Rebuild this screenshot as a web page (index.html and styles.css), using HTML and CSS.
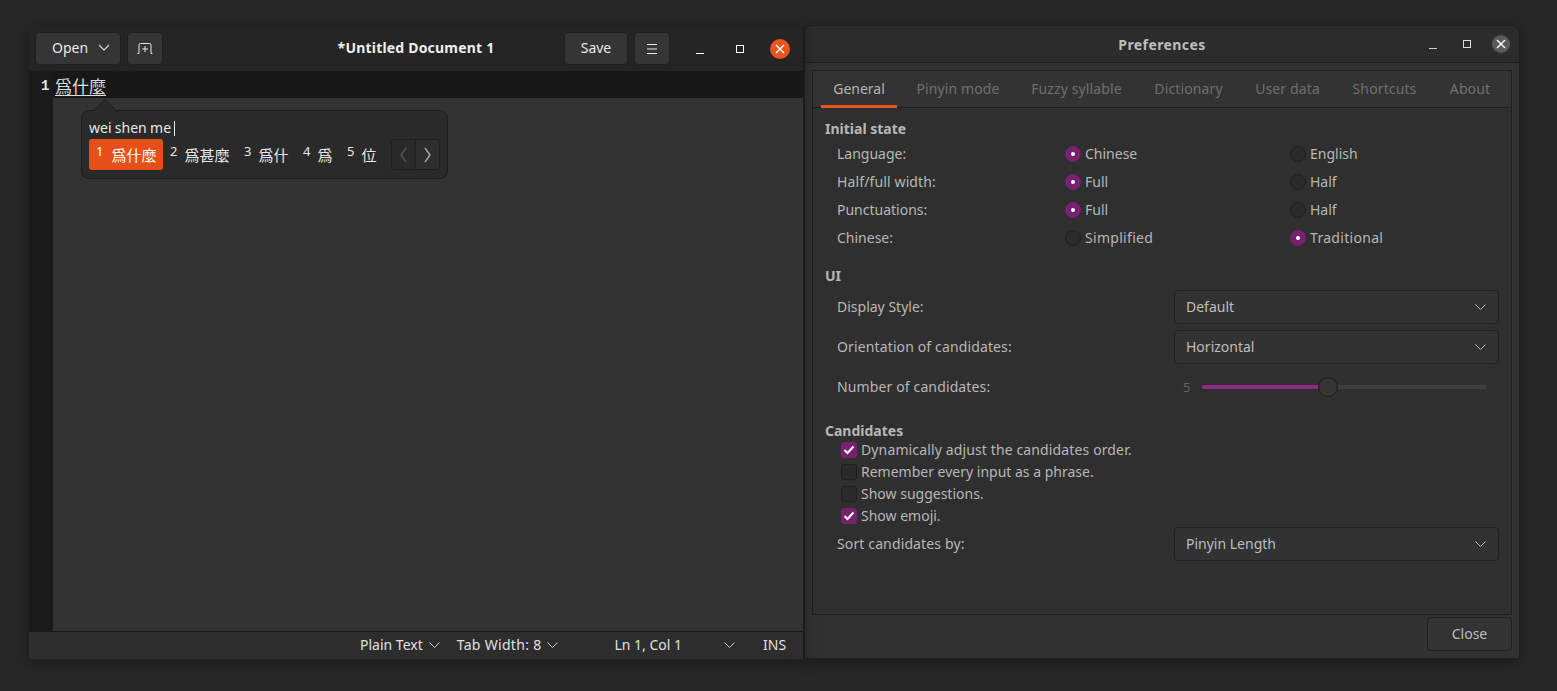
FILE: index.html
```html
<!DOCTYPE html>
<html lang="en">
<head>
<meta charset="utf-8">
<title>Preferences</title>
<link rel="stylesheet" href="styles.css">
</head>
<body>
<div class="desktop">
  <section class="window editor-win">
    <header class="ed-head">
      <button class="btn open-btn"><span>Open</span><svg class="chev" width="12" height="7" viewBox="0 0 12 7"><path d="M1 1l5 5 5-5" fill="none" stroke="#dcdcdc" stroke-width="1.1"/></svg></button>
      <button class="btn icon-btn"><svg width="16" height="12" viewBox="0 0 16 12"><path d="M.5 10.500h1.500V2A1.500 1.500 0 0 1 3.500.5h9A1.500 1.500 0 0 1 14 2v8.500h1.500M8 3v6M5 6h6" fill="none" stroke="#e6e6e6" stroke-width="1"/></svg></button>
      <div class="ed-title">*Untitled Document 1</div>
      <button class="btn save-btn">Save</button>
      <button class="btn icon-btn menu-btn"><svg width="12" height="10" viewBox="0 0 12 10"><path d="M1 .5h10M1 5h10M1 9.500h10" stroke="#e6e6e6" stroke-width="1"/></svg></button>
      <div class="wm wm-ed">
        <svg width="10" height="10" viewBox="0 0 10 10"><path d="M1 9.500h8" stroke="#fff" stroke-width="1"/></svg>
        <svg width="10" height="10" viewBox="0 0 10 10"><rect x="1.500" y="1.500" width="7" height="7" fill="none" stroke="#fff" stroke-width="1"/></svg>
        <span class="wm-close"><svg width="10" height="10" viewBox="0 0 10 10"><path d="M1 1l8 8M9 1l-8 8" stroke="#fff" stroke-width="1.400"/></svg></span>
      </div>
    </header>
    <div class="ed-body">
      <div class="gutter"><div class="gutter-line">1</div></div>
      <div class="ed-main">
        <div class="cur-line"><span class="preedit">爲什麼</span></div>
        <div class="ed-page"></div>
      </div>
      <div class="ime">
        <svg class="ime-tip" width="26" height="13" viewBox="0 0 26 13"><path d="M0 12.500 12 .5l12 12" fill="#2a2a2a" stroke="#1d1d1d"/></svg>
        <div class="ime-input">wei shen me <span class="caret"></span></div>
        <div class="ime-cands">
          <div class="cand sel"><sup>1</sup><span>爲什麼</span></div>
          <div class="cand c2"><sup>2</sup><span>爲甚麼</span></div>
          <div class="cand c3"><sup>3</sup><span>爲什</span></div>
          <div class="cand c4"><sup>4</sup><span>爲</span></div>
          <div class="cand c5"><sup>5</sup><span>位</span></div>
          <div class="ime-nav">
            <span><svg width="7" height="16" viewBox="0 0 7 16"><path d="M6 1L1 8l5 7" fill="none" stroke="#555" stroke-width="1.400"/></svg></span>
            <span><svg width="7" height="16" viewBox="0 0 7 16"><path d="M1 1l5 7-5 7" fill="none" stroke="#aaa" stroke-width="1.400"/></svg></span>
          </div>
        </div>
      </div>
    </div>
    <footer class="status">
      <span class="st st-lang">Plain Text<svg width="11" height="6" viewBox="0 0 11 6"><path d="M.5.5l5 5 5-5" fill="none" stroke="#ccc"/></svg></span>
      <span class="st st-tab">Tab Width: 8<svg width="11" height="6" viewBox="0 0 11 6"><path d="M.5.5l5 5 5-5" fill="none" stroke="#ccc"/></svg></span>
      <span class="st st-pos">Ln 1, Col 1</span>
      <svg class="st-chev" width="11" height="6" viewBox="0 0 11 6"><path d="M.5.5l5 5 5-5" fill="none" stroke="#ccc"/></svg>
      <span class="st st-ins">INS</span>
    </footer>
  </section>

  <section class="window pref-win">
    <header class="pref-head">
      <div class="pref-title">Preferences</div>
      <div class="wm wm-pref">
        <svg width="10" height="10" viewBox="0 0 10 10"><path d="M1 9.500h8" stroke="#ccc" stroke-width="1"/></svg>
        <svg width="10" height="10" viewBox="0 0 10 10"><rect x="1.500" y="1.500" width="7" height="7" fill="none" stroke="#ddd" stroke-width="1"/></svg>
        <span class="wm-close-p"><svg width="10" height="10" viewBox="0 0 10 10"><path d="M1 1l8 8M9 1l-8 8" stroke="#fff" stroke-width="1.400"/></svg></span>
      </div>
    </header>
    <div class="notebook">
      <nav class="tabs">
        <span class="tab active t1">General</span>
        <span class="tab t2">Pinyin mode</span>
        <span class="tab t3">Fuzzy syllable</span>
        <span class="tab t4">Dictionary</span>
        <span class="tab t5">User data</span>
        <span class="tab t6">Shortcuts</span>
        <span class="tab t7">About</span>
      </nav>
      <div class="page">
        <h3 class="head h-init">Initial state</h3>
        <div class="radio-row"><span class="lbl">Language:</span><span class="opt"><i class="radio on"></i>Chinese</span><span class="opt"><i class="radio"></i>English</span></div>
        <div class="radio-row"><span class="lbl ls1">Half/full width:</span><span class="opt"><i class="radio on"></i>Full</span><span class="opt"><i class="radio"></i>Half</span></div>
        <div class="radio-row"><span class="lbl">Punctuations:</span><span class="opt"><i class="radio on"></i>Full</span><span class="opt"><i class="radio"></i>Half</span></div>
        <div class="radio-row"><span class="lbl">Chinese:</span><span class="opt ls2"><i class="radio"></i>Simplified</span><span class="opt ls2"><i class="radio on"></i>Traditional</span></div>
        <h3 class="head h-ui">UI</h3>
        <div class="combo-row"><span class="lbl">Display Style:</span><div class="combo"><span>Default</span><svg width="11" height="6" viewBox="0 0 11 6"><path d="M.5.500l5 5 5-5" fill="none" stroke="#bbb"/></svg></div></div>
        <div class="combo-row"><span class="lbl ls1">Orientation of candidates:</span><div class="combo"><span>Horizontal</span><svg width="11" height="6" viewBox="0 0 11 6"><path d="M.5.500l5 5 5-5" fill="none" stroke="#bbb"/></svg></div></div>
        <div class="slider-row"><span class="lbl ls1">Number of candidates:</span>
          <div class="slider-wrap"><span class="val">5</span><div class="track"><div class="fill"></div><div class="knob"></div></div></div>
        </div>
        <h3 class="head h-cand">Candidates</h3>
        <div class="checks">
          <div class="chk-row ls1"><i class="chk on"><svg width="12" height="10" viewBox="0 0 12 10"><path d="M1.500 5l3 3 6-6.500" fill="none" stroke="#fff" stroke-width="2"/></svg></i>Dynamically adjust the candidates order.</div>
          <div class="chk-row"><i class="chk"></i>Remember every input as a phrase.</div>
          <div class="chk-row"><i class="chk"></i>Show suggestions.</div>
          <div class="chk-row"><i class="chk on"><svg width="12" height="10" viewBox="0 0 12 10"><path d="M1.500 5l3 3 6-6.500" fill="none" stroke="#fff" stroke-width="2"/></svg></i>Show emoji.</div>
        </div>
        <div class="combo-row sort"><span class="lbl ls1">Sort candidates by:</span><div class="combo"><span>Pinyin Length</span><svg width="11" height="6" viewBox="0 0 11 6"><path d="M.5.500l5 5 5-5" fill="none" stroke="#bbb"/></svg></div></div>
      </div>
    </div>
    <footer class="pref-foot"><button class="btn close-btn">Close</button></footer>
  </section>
</div>
</body>
</html>
```
FILE: styles.css
```css
* { box-sizing: border-box; }
html, body { margin: 0; height: 100%; }
body { background: #272727; overflow: hidden; font-family: "Noto Sans", "Noto Sans CJK JP", sans-serif; font-size: 14px; color: #d5d5d5; }
.desktop { position: relative; width: 1557px; height: 691px; }
.window { position: absolute; display: flex; flex-direction: column; border-radius: 8px 8px 0 0; box-shadow: 0 3px 14px rgba(0,0,0,.35); }
.editor-win { left: 29px; top: 26px; width: 774px; height: 633px; background: #2d2d2d; z-index: 2; }
.pref-win { left: 805px; top: 26px; width: 714px; height: 632px; background: #313131; outline: 1px solid #1f1f1f; }
.ls1 { letter-spacing: .13px; }
.ls2 { letter-spacing: .3px; }

.btn { font: inherit; color: #e8e8e8; background: #353535; border: 1px solid #1f1f1f; border-radius: 4px; height: 33px; padding: 0 0 2px; display: flex; align-items: center; justify-content: center; }
.ed-head { height: 45px; display: flex; align-items: center; padding: 0 0 0 6px; background: #252525; border-radius: 8px 8px 0 0; }
.open-btn { width: 86px; gap: 10px; padding-left: 6px; }
.icon-btn { width: 36px; margin-left: 6px; padding: 0; }
.ed-title { position: absolute; left: 0; width: 774px; text-align: center; font-weight: 700; color: #eee; pointer-events: none; letter-spacing: .2px; padding-bottom: 2px; }
.save-btn { width: 64px; margin-left: auto; }
.wm { display: flex; align-items: center; }
.wm-ed { margin-left: 25px; margin-right: 13px; gap: 30px; }
.wm-close { width: 20px; height: 20px; border-radius: 50%; background: #e95420; display: flex; align-items: center; justify-content: center; margin-left: -5px; }

.ed-body { position: relative; flex: 1; display: flex; min-height: 0; }
.gutter { width: 24px; background: #1a1a1a; font-family: "Liberation Mono", monospace; font-weight: 700; font-size: 14px; }
.gutter-line { height: 27px; line-height: 31px; padding-left: 12px; color: #e6e6e6; }
.ed-main { flex: 1; display: flex; flex-direction: column; }
.cur-line { height: 27px; background: #181818; padding-left: 2px; line-height: 31px; font-size: 17px; color: #ddd; }
.preedit { text-decoration: underline; text-underline-offset: 2px; }
.ed-page { flex: 1; background: #333; }

.ime { position: absolute; left: 52px; top: 39px; width: 367px; height: 69px; background: #2a2a2a; border: 1px solid #1d1d1d; border-radius: 8px; padding: 7px; z-index: 3; }
.ime-tip { position: absolute; left: 11px; top: -12px; }
.ime-input { height: 21px; line-height: 20px; color: #e8e8e8; white-space: nowrap; word-spacing: -.3px; }
.caret { display: inline-block; width: 1px; height: 15px; background: #dfeaff; vertical-align: -3px; }
.ime-cands { display: flex; align-items: center; height: 31px; }
.cand { display: flex; height: 31px; align-items: center; color: #e8e8e8; border-radius: 3px; padding: 0 7px; white-space: nowrap; }
.cand sup { font-size: 13px; line-height: 1; margin-right: 7px; position: relative; top: -3px; }
.cand span { position: relative; top: 0; font-size: 15px; }
.cand.sel { background: #e5501a; color: #fff; width: 74px; }
.cand.sel sup { margin-right: 8px; }
.c2 { width: 74px; } .c3 { width: 59px; } .c4 { width: 44px; } .c5 { width: 44px; }
.ime-nav { margin-left: auto; width: 49px; height: 31px; display: flex; border: 1px solid #1f1f1f; border-radius: 4px; background: #2e2e2e; }
.ime-nav span { flex: 1; display: flex; align-items: center; justify-content: center; }
.ime-nav span:first-child { border-right: 1px solid #1f1f1f; background: #292929; }

.status { height: 28px; background: #2d2d2d; border-top: 1px solid #191919; display: flex; align-items: center; color: #e0e0e0; font-size: 14px; padding-bottom: 2px; }
.st { display: flex; align-items: center; gap: 6px; white-space: nowrap; }
.st-lang { margin-left: 331px; }
.st-tab { margin-left: 17px; letter-spacing: .3px; }
.st-pos { margin-left: 56px; }
.st-chev { margin-left: 42px; }
.st-ins { margin-left: 28px; }

.pref-head { height: 37px; background: #2c2c2c; border-bottom: 1px solid #1f1f1f; border-radius: 8px 8px 0 0; display: flex; align-items: center; position: relative; }
.pref-title { position: absolute; left: 0; width: 714px; text-align: center; font-weight: 700; color: #bdbdbd; letter-spacing: .4px; }
.wm-pref { margin-left: auto; margin-right: 9px; gap: 24px; }
.wm-close-p { width: 18px; height: 18px; border-radius: 50%; background: #5a5a5a; display: flex; align-items: center; justify-content: center; margin-left: -4px; }

.notebook { margin: 7px 7px 0 7px; width: 700px; height: 545px; border: 1px solid #1f1f1f; background: #2f2f2f; display: flex; flex-direction: column; }
.tabs { height: 37px; background: #333; border-bottom: 1px solid #1f1f1f; display: flex; padding-left: 8px; gap: 8px; }
.tab { height: 37px; line-height: 36px; color: #6f6f6f; white-space: nowrap; text-align: center; letter-spacing: .12px; }
.t1 { width: 76px; } .t2 { width: 106px; } .t3 { width: 115px; } .t4 { width: 93px; } .t5 { width: 89px; } .t6 { width: 89px; } .t7 { width: 66px; }
.tab.active { color: #b4b4b4; border-bottom: 3px solid #e95420; letter-spacing: 0; }
.page { flex: 1; padding: 0 12px; color: #b7b7b7; }
.head { margin: 0; font-size: 14px; font-weight: 700; color: #b7b7b7; line-height: 20px; }
.h-init { margin-top: 11px; margin-bottom: 1px; }
.h-ui { margin-top: 14px; }
.h-cand { margin-top: 17px; }
.radio-row { display: grid; grid-template-columns: 228px 225px 1fr; height: 28px; align-items: center; padding-left: 12px; }
.lbl { white-space: nowrap; }
.radio-row .lbl, .opt { padding-bottom: 2px; }
.opt { display: flex; align-items: center; gap: 4px; }
.radio { width: 16px; height: 16px; margin-top: 2px; border-radius: 50%; border: 1px solid #1f1f1f; background: #2b2b2b; display: block; position: relative; flex: none; }
.radio.on { background: #77216f; border-color: #77216f; }
.radio.on::after { content: ""; position: absolute; left: 5px; top: 5px; width: 4px; height: 4px; border-radius: 50%; background: #fff; }
.combo-row { display: flex; align-items: center; justify-content: space-between; height: 34px; padding-left: 12px; margin-bottom: 6px; }
.h-ui + .combo-row { margin-top: 4px; }
.combo-row .lbl, .slider-row .lbl, .combo span { padding-bottom: 2px; }
.combo { width: 325px; height: 34px; border: 1px solid #1f1f1f; border-radius: 4px; background: #323232; padding: 0 12px 0 11px; display: flex; align-items: center; justify-content: space-between; color: #bdbdbd; }
.slider-row { display: flex; align-items: center; justify-content: space-between; height: 34px; padding-left: 12px; }
.slider-wrap { width: 325px; display: flex; align-items: center; }
.val { color: #666; width: 28px; padding-left: 9px; font-size: 13px; }
.track { position: relative; width: 285px; height: 4px; border-radius: 2px; background: #3f3f3f; }
.fill { width: 118px; height: 4px; background: #8f2a87; border-radius: 2px; }
.knob { position: absolute; left: 116px; top: -8px; width: 20px; height: 20px; border-radius: 50%; border: 1px solid #1c1c1c; background: #353535; }
.checks { padding-left: 16px; margin-top: -2px; }
.chk-row { display: flex; align-items: center; height: 22px; gap: 4px; white-space: nowrap; padding-bottom: 2px; }
.chk { width: 16px; height: 16px; margin-top: 2px; border-radius: 3px; border: 1px solid #1f1f1f; background: #2b2b2b; display: flex; align-items: center; justify-content: center; flex: none; }
.chk.on { background: #77216f; border-color: #77216f; }
.combo-row.sort { margin: 0; }
.pref-foot { flex: 1; display: flex; justify-content: flex-end; padding: 2px 7px 0 0; }
.close-btn { width: 85px; height: 34px; background: #333; color: #bdbdbd; }
```
